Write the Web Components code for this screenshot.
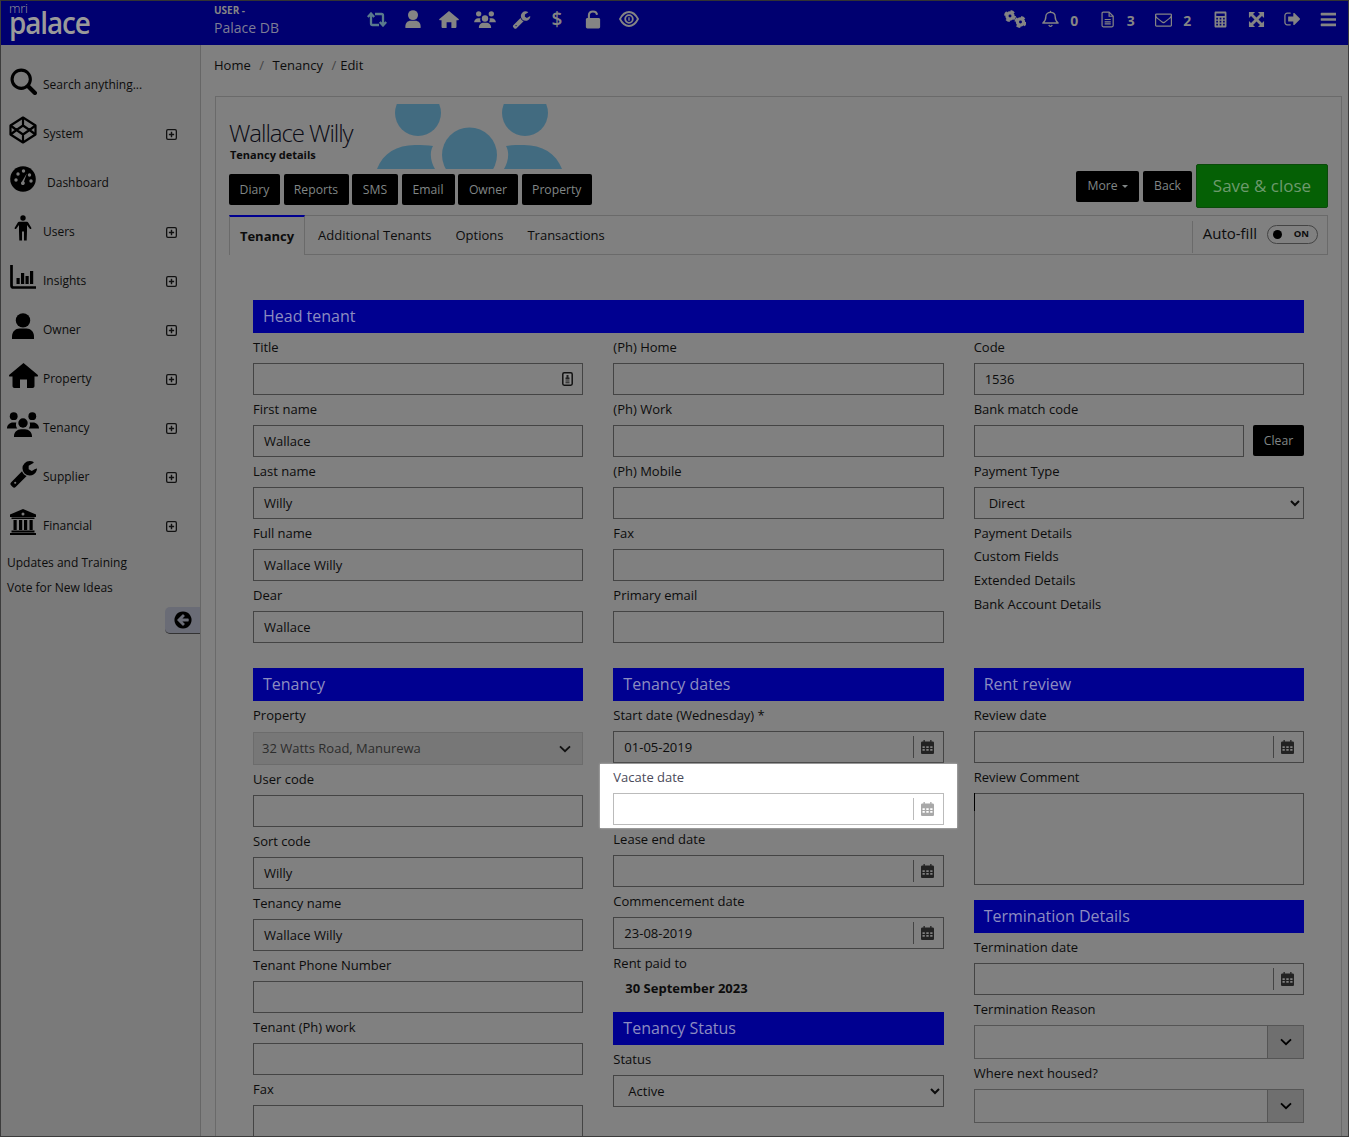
<!DOCTYPE html>
<html lang="en"><head><meta charset="utf-8"><title>Tenancy</title>
<style>
html,body{margin:0;padding:0;background:#808080;}
body{font-family:"Open Sans","Liberation Sans",sans-serif;font-size:13px;color:#0c0c0c;}
.col{display:block;min-width:0}
.g3{display:grid;grid-template-columns:repeat(3,1fr);column-gap:30px}
p-crumbs a{display:inline-flex;align-items:center}
p-crumbs a+a::before{content:"/";color:#444;margin:0 8.500px}
p-crumbs a:last-child::before{margin-right:4px}
p-linklist a{display:block}
</style></head><body>
<p-app>
  <p-header slot="header"></p-header>
  <p-sidebar slot="side">
    <p-nav icon="search">Search anything...</p-nav>
    <p-nav icon="codepen" plus>System</p-nav>
    <p-nav icon="dash" shift>Dashboard</p-nav>
    <p-nav icon="male" plus>Users</p-nav>
    <p-nav icon="chart" plus>Insights</p-nav>
    <p-nav icon="user" plus>Owner</p-nav>
    <p-nav icon="home" plus>Property</p-nav>
    <p-nav icon="users" plus>Tenancy</p-nav>
    <p-nav icon="wrench" plus>Supplier</p-nav>
    <p-nav icon="bank" plus>Financial</p-nav>
  </p-sidebar>
  <p-crumbs>
    <a>Home</a><a>Tenancy</a><a>Edit</a>
  </p-crumbs>
  <p-panel>
    <p-head></p-head>
    <p-tabs></p-tabs>
    <p-body>
      <p-section title="Head tenant">
        <div class="g3">
          <div class="col">
            <p-field label="Title" type="pick"></p-field>
            <p-field label="First name">Wallace</p-field>
            <p-field label="Last name">Willy</p-field>
            <p-field label="Full name">Wallace Willy</p-field>
            <p-field label="Dear">Wallace</p-field>
          </div>
          <div class="col">
            <p-field label="(Ph) Home"></p-field>
            <p-field label="(Ph) Work"></p-field>
            <p-field label="(Ph) Mobile"></p-field>
            <p-field label="Fax"></p-field>
            <p-field label="Primary email"></p-field>
          </div>
          <div class="col">
            <p-field label="Code">1536</p-field>
            <p-field label="Bank match code" type="clear"></p-field>
            <p-field label="Payment Type" type="native" options="Direct"></p-field>
            <p-linklist><a>Payment Details</a><a>Custom Fields</a><a>Extended Details</a><a>Bank Account Details</a></p-linklist>
          </div>
        </div>
      </p-section>
      <div class="g3" style="margin-top:25px">
        <div class="col">
          <p-section title="Tenancy">
            <p-field label="Property" type="disabled">32 Watts Road, Manurewa</p-field>
            <p-field label="User code"></p-field>
            <p-field label="Sort code">Willy</p-field>
            <p-field label="Tenancy name">Wallace Willy</p-field>
            <p-field label="Tenant Phone Number"></p-field>
            <p-field label="Tenant (Ph) work"></p-field>
            <p-field label="Fax"></p-field>
          </p-section>
        </div>
        <div class="col">
          <p-section title="Tenancy dates">
            <p-field label="Start date (Wednesday) *" type="date">01-05-2019</p-field>
            <p-field label="Vacate date" type="date" spot></p-field>
            <p-field label="Lease end date" type="date"></p-field>
            <p-field label="Commencement date" type="date">23-08-2019</p-field>
            <p-field label="Rent paid to" type="static">30 September 2023</p-field>
          </p-section>
          <p-section title="Tenancy Status">
            <p-field label="Status" type="native" options="Active"></p-field>
          </p-section>
        </div>
        <div class="col">
          <p-section title="Rent review">
            <p-field label="Review date" type="date"></p-field>
            <p-field label="Review Comment" type="area"></p-field>
          </p-section>
          <p-section title="Termination Details" style="margin-top:15px">
            <p-field label="Termination date" type="date"></p-field>
            <p-field label="Termination Reason" type="combo"></p-field>
            <p-field label="Where next housed?" type="combo"></p-field>
          </p-section>
        </div>
      </div>
    </p-body>
  </p-panel>
</p-app>
<script>
const FA={
 bars:[1536,'M1664 1344v128q0 26-19 45t-45 19h-1408q-26 0-45-19t-19-45v-128q0-26 19-45t45-19h1408q26 0 45 19t19 45zm0-512v128q0 26-19 45t-45 19h-1408q-26 0-45-19t-19-45v-128q0-26 19-45t45-19h1408q26 0 45 19t19 45zm0-512v128q0 26-19 45t-45 19h-1408q-26 0-45-19t-19-45v-128q0-26 19-45t45-19h1408q26 0 45 19t19 45z',0],
 wrench:[1792,'M448 1472q0-26-19-45t-45-19-45 19-19 45 19 45 45 19 45-19 19-45zm644-420l-682 682q-37 37-90 37-52 0-91-37l-106-108q-38-36-38-90 0-53 38-91l681-681q39 98 114.5 173.5t173.5 114.5zm634-435q0 39-23 106-47 134-164.5 217.5t-258.5 83.5q-185 0-316.5-131.5t-131.5-316.5 131.5-316.5 316.5-131.5q58 0 121.5 16.5t107.5 46.5q16 11 16 28t-16 28l-293 169v224l193 107q5-3 79-48.5t135.5-81 70.5-35.5q15 0 23.5 10t8.5 25z',0],
 signout:[1664,'M704 1440q0 4 1 20t.5 26.5-3 23.5-10 19.5-20.5 6.5h-320q-119 0-203.5-84.5t-84.5-203.5v-704q0-119 84.5-203.5t203.5-84.5h320q13 0 22.5 9.5t9.5 22.5q0 4 1 20t.5 26.5-3 23.5-10 19.5-20.5 6.5h-320q-66 0-113 47t-47 113v704q0 66 47 113t113 47h312l11.5 1 11.5 3 8 5.5 7 9 2 13.5zm928-544q0 26-19 45l-544 544q-19 19-45 19t-45-19-19-45v-288h-448q-26 0-45-19t-19-45v-384q0-26 19-45t45-19h448v-288q0-26 19-45t45-19 45 19l544 544q19 19 19 45z',0],
 back:[1792,'M1408 960v-128q0-26-18.5-45t-45.5-19h-502l189-189q19-19 19-45t-19-45l-91-91q-18-18-45-18t-45 18l-362 362-91 91q-18 18-18 45t18 45l91 91 362 362q18 18 45 18t45-18l91-91q18-18 18-45t-18-45l-189-189h502q27 0 45.5-19t18.5-45zm256-64q0 209-103 385.5t-279.5 279.5-385.5 103-385.5-103-279.5-279.5-103-385.5 103-385.5 279.5-279.5 385.5-103 385.5 103 279.5 279.5 103 385.5z',0],
 mail:[1792,'M1664 1504v-768q-32 36-69 66-268 206-426 338-51 43-83 67t-86.5 48.5-102.5 24.5h-2q-48 0-102.5-24.5t-86.5-48.5-83-67q-158-132-426-338-37-30-69-66v768q0 13 9.5 22.5t22.5 9.5h1472q13 0 22.5-9.5t9.5-22.5zm0-1051v-24.5l-.5-13-3-12.5-5.5-9-9-7.5-14-2.5h-1472q-13 0-22.5 9.5t-9.5 22.5q0 168 147 284 193 152 401 317 6 5 35 29.5t46 37.5 44.5 31.5 50.5 27.5 43 9h2q20 0 43-9t50.5-27.5 44.5-31.5 46-37.5 35-29.5q208-165 401-317 54-43 100.5-115.5t46.5-131.5zm128-37v1088q0 66-47 113t-113 47h-1472q-66 0-113-47t-47-113v-1088q0-66 47-113t113-47h1472q66 0 113 47t47 113z',0]
};
const gear=(x,y,r)=>`<circle cx="${x}" cy="${y}" r="${r*.72}" fill="none" stroke="currentColor" stroke-width="${r*.75}"/><circle cx="${x}" cy="${y}" r="${r*1.12}" fill="none" stroke="currentColor" stroke-width="${r*.55}" stroke-dasharray="${r*.88} ${r*.88}"/>`;
const HAND={
 user:`<svg viewBox="0 0 22 26" fill="currentColor"><circle cx="11" cy="7.400" r="7.200"/><path d="M0 26v-2.500C0 18.500 3.500 15.500 7.500 15.500h7c4 0 7.500 3 7.500 8V26z"/></svg>`,
 home:`<svg viewBox="0 0 29 25" fill="currentColor"><path d="M14.500 0 28.600 11.800c.8.700.3 1.800-.6 1.800H25.500V23c0 1.200-.8 2-2 2H18V16.500H11V25H5.500c-1.200 0-2-.8-2-2V13.600H1c-.9 0-1.400-1.100-.6-1.800z"/></svg>`,
 users:`<svg viewBox="0 0 32 25" fill="currentColor"><circle cx="6.700" cy="4.200" r="3.900"/><circle cx="25.300" cy="4.200" r="3.900"/><circle cx="16" cy="11" r="4.700"/><path d="M0 16.500c0-3.500 2.800-6 6-6h3.300c-.7 2.200-.3 4.300 1 6zM32 16.500c0-3.500-2.800-6-6-6h-3.300c.7 2.200.3 4.300-1 6zM7 25v-.8c0-4 3.200-7 7-7h4c3.800 0 7 3 7 7v.8z"/></svg>`,
 retweet:`<svg viewBox="0 0 20 15" fill="none" stroke="currentColor" stroke-width="2.300"><path d="M.8 5 4 1.500 7.200 5M4 2v9.500Q4 13 5.500 13H12M8 2h6.500Q16 2 16 3.500V13M12.800 10 16 13.500 19.200 10"/></svg>`,
 search:`<svg viewBox="0 0 26 26" fill="none" stroke="currentColor"><circle cx="10.800" cy="10.800" r="8.800" stroke-width="3"/><path d="M17.500 17.500 24 24" stroke-width="4" stroke-linecap="round"/></svg>`,
 cal:`<svg viewBox="0 0 13 14"><path fill="currentColor" fill-rule="evenodd" d="M2.500 0h1.300v1.500h5.400V0h1.300v1.500h1.200c.7 0 1.300.6 1.300 1.300v9.900c0 .7-.6 1.300-1.300 1.300H1.300C.6 14 0 13.400 0 12.700V2.800c0-.7.6-1.300 1.300-1.300h1.200zM1.500 6.200v1.700h2.300V6.200zm3.800 0v1.700h2.400V6.200zm3.900 0v1.700h2.300V6.200zm-7.700 2.900v1.700h2.300V9.100zm3.800 0v1.700h2.400V9.100zm3.900 0v1.700h2.300V9.100z"/></svg>`,
 cogs:`<svg viewBox="0 0 22 18">${gear(6,6,4.300)}${gear(16.500,12,4.300)}</svg>`,
 bell:`<svg viewBox="0 0 20 20" fill="none" stroke="currentColor" stroke-width="1.600"><path d="M10 2.200c-3.500 0-5.500 2.300-5.500 5.200 0 3.800-1.300 5.600-3.500 7.300h18c-2.200-1.700-3.500-3.500-3.500-7.300 0-2.900-2-5.200-5.500-5.200z" stroke-linejoin="round"/><path d="M8 17.200c.4 1 1.100 1.500 2 1.500s1.600-.5 2-1.500"/><path d="M10 .4v1.800"/></svg>`,
 file:`<svg viewBox="0 0 16 20" fill="none" stroke="currentColor" stroke-width="1.500"><path d="M2.800 1H10l5 5v11.500c0 .9-.6 1.500-1.500 1.500H2.800c-.9 0-1.500-.6-1.500-1.500v-15C1.300 1.600 1.900 1 2.800 1z" stroke-linejoin="round"/><path d="M10 1v5h5M4.500 10h7.500M4.500 12.800h7.500M4.500 15.500h7.500"/></svg>`,
 calc:`<svg viewBox="0 0 15 20"><path fill="currentColor" fill-rule="evenodd" d="M2 .5h11c.9 0 1.500.6 1.500 1.500v16c0 .9-.6 1.500-1.500 1.500H2c-.9 0-1.500-.6-1.500-1.500V2C.5 1.100 1.100.5 2 .5zM2.500 3v3h10V3zM2.500 8v2h2V8zm4 0v2h2V8zm4 0v2h2V8zm-8 3.500v2h2v-2zm4 0v2h2v-2zm4 0v2h2v-2zm-8 3.500v2h2v-2zm4 0v2h2v-2zm4 0v2h2v-2z"/></svg>`,
 arrows:`<svg viewBox="0 0 18 18" fill="currentColor"><path d="M1 1h6.500L5.300 3.200 9 6.900l3.700-3.700L10.500 1H17v6.500l-2.200-2.200L11.100 9l3.700 3.700 2.200-2.200V17h-6.500l2.200-2.200L9 11.100l-3.700 3.700L7.500 17H1v-6.500l2.200 2.200L6.900 9 3.200 5.300 1 7.500z"/></svg>`,
 unlock:`<svg viewBox="0 0 16 20"><path fill="currentColor" d="M2 8.500h12c.8 0 1.500.7 1.500 1.500v8c0 .8-.7 1.500-1.500 1.500H2c-.8 0-1.500-.7-1.500-1.500v-8c0-.8.7-1.500 1.500-1.500z"/><path d="M3.700 9V5.500C3.700 3 5.500 1.500 8 1.500s4 1.300 4.300 3.500" fill="none" stroke="currentColor" stroke-width="2.200"/></svg>`,
 eye:`<svg viewBox="0 0 20 16" fill="none" stroke="currentColor" stroke-width="1.800"><path d="M1 8c2.200-4.300 5.300-7 9-7s6.800 2.700 9 7c-2.200 4.300-5.300 7-9 7s-6.800-2.700-9-7z"/><circle cx="10" cy="8" r="3.800"/><path d="M10 6.300v3.400" stroke-width="1.400"/></svg>`,
 codepen:`<svg viewBox="0 0 28 28" fill="none" stroke="currentColor" stroke-width="2.200" stroke-linejoin="round"><path d="M14 1.500 26.500 9.500v9L14 26.500 1.500 18.500v-9z"/><path d="M14 9.500 20.500 14 14 18.500 7.500 14zM14 1.500v8M14 18.500v8M1.500 9.500 7.500 14M26.500 9.500 20.500 14M1.500 18.500 7.500 14M26.500 18.500 20.500 14"/></svg>`,
 dash:`<svg viewBox="0 0 26 26"><circle cx="13" cy="13" r="12.800" fill="currentColor"/><g fill="#7a7a7a"><circle cx="6" cy="14" r="1.700"/><circle cx="8" cy="8" r="1.700"/><circle cx="13.500" cy="5" r="1.700"/><circle cx="19.500" cy="9" r="1.700"/><circle cx="21" cy="15" r="1.700"/><path d="M16.800 7.500 14 15.500c1.200.6 1.200 3-.5 3.500-2.200.6-3.500-2.200-1.500-3.500z"/></g></svg>`,
 male:`<svg viewBox="0 0 18 26" fill="currentColor"><circle cx="9" cy="3" r="2.700"/><path d="M5.600 6.800h6.800c1 0 1.500.4 1.900 1l3 5c.5 1-.9 1.800-1.500.9L13 10v6.300L12.700 25.500H10v-9H8v9H5.300L5 16.300V10l-2.800 3.700c-.6.900-2 .1-1.500-.9l3-5c.4-.6.900-1 1.900-1z"/></svg>`,
 chart:`<svg viewBox="0 0 26 24"><path d="M1.500 0v20.500c0 1.300.8 2 2 2H25.500" fill="none" stroke="currentColor" stroke-width="2.700" stroke-linecap="round"/><g fill="currentColor"><rect x="6.500" y="13" width="3.200" height="6"/><rect x="11" y="8" width="3.200" height="11"/><rect x="15.500" y="11" width="3.200" height="8"/><rect x="20" y="6" width="3.200" height="13"/></g></svg>`,
 bank:`<svg viewBox="0 0 26 26" fill="currentColor"><path d="M13 0 26 5.500V8H0V5.500z"/><path d="M1.500 8.500h23V10h-23z"/><rect x="3.500" y="11" width="3.200" height="10"/><rect x="9" y="11" width="3.200" height="10"/><rect x="14" y="11" width="3.200" height="10"/><rect x="19.500" y="11" width="3.200" height="10"/><path d="M1.500 21.500h23V23.500h-23zM0 24h26v2H0z"/><circle cx="13" cy="5" r="1.500" fill="#7a7a7a"/></svg>`,
 plus:`<svg viewBox="0 0 10 10"><rect x=".6" y=".6" width="8.800" height="8.800" rx="1.200" fill="#858585" stroke="currentColor" stroke-width="1.200"/><path d="M5 2.600v4.800M2.600 5h4.800" stroke="currentColor" stroke-width="1.300"/></svg>`,
 idcard:`<svg viewBox="0 0 11 14"><rect x=".8" y=".8" width="9.400" height="12.400" rx="1.400" fill="#8a8a8a" stroke="#111" stroke-width="1.500"/><path d="M4.500 3h2v2.500h1v2h-4v-2h1zM3.500 8.500h4v1h-4zM3.500 10.300h4v1h-4z" fill="#222"/></svg>`,
 chev:`<svg viewBox="0 0 12 8" fill="none" stroke="currentColor" stroke-width="1.800"><path d="M1 1.300 6 6.200 11 1.300"/></svg>`
};
function icon(name,w,h){
  let s;
  if(HAND[name]) s=HAND[name];
  else{const a=FA[name];const top=a[2]||0;s=`<svg viewBox="0 ${top} ${a[0]} 1792"><path fill="currentColor" d="${a[1]}"/></svg>`;}
  return s.replace('<svg ',`<svg style="width:${w}px;height:${h}px;display:block;flex:none" aria-hidden="true" `);
}
function def(tag,css,html){
  customElements.define(tag,class extends HTMLElement{
    connectedCallback(){
      if(this.shadowRoot)return;
      const r=this.attachShadow({mode:'open'});
      r.innerHTML=`<style>${css}</style>`+(typeof html==='function'?html(this):html);
    }
  });
}
def('p-app',`
 :host{display:block;box-sizing:border-box;width:1349px;height:1137px;overflow:hidden;border:1px solid #3c3c3c;border-top-color:#333;background:#808080}
 .main{display:flex;height:1092px}
 .side{flex:none;width:199px}
 .content{flex:1;min-width:0;padding:0 6px 0 14px}
`,`<slot name="header"></slot><div class="main"><div class="side"><slot name="side"></slot></div><div class="content"><slot></slot></div></div>`);
const hTop=[['retweet',20,15,'#5a7a8c'],['user',16,18],['home',20,17],['users',22,17],['wrench',19,19],['$'],['unlock',16,19],['eye',20,16]];
const hRight=[['cogs',22,18],['bell',17,18],0,['file',13,17],3,['mail',17,17],2,['calc',13,17],['arrows',17,17],['signout',18,18],['bars',17,19]];
def('p-header',`
 :host{display:flex;height:44px;background:#000070;color:#848484;align-items:flex-start}
 .logo{width:213px;flex:none;box-sizing:border-box;padding:0 0 0 8px;color:#9a9a9a;line-height:1}
 .mri{display:block;font:300 13px/11px "Open Sans",sans-serif;padding-top:2px;height:11px;letter-spacing:-.3px}
 .pal{display:block;font:600 30px/24px "Open Sans",sans-serif;letter-spacing:-1.200px;transform:scaleX(.93);transform-origin:left;margin-top:-3px}
 .who{width:145px;flex:none;padding-top:3px}
 .u{font:700 10px/12px "Open Sans",sans-serif;color:#858585;display:block}
 .d{font:400 14px/20px "Open Sans",sans-serif;color:#7d7d95;display:block;margin-top:2px}
 .ic{width:36px;flex:none;display:flex;align-items:center;justify-content:center;height:36px;box-sizing:border-box}
 .dollar{font:600 19px/1 "Open Sans",sans-serif}
 .sp{flex:1}
 .n{width:20.500px;box-sizing:border-box;padding-right:9px;flex:none;height:40px;display:flex;align-items:center;justify-content:center;font:700 14px/1 "Open Sans",sans-serif;color:#858585}
 .end{width:2px;flex:none}
`,()=>`<div class="logo"><span class="mri">mri</span><span class="pal">palace</span></div>
 <div class="who"><span class="u">USER -</span><span class="d">Palace DB</span></div>
 ${hTop.map(i=>i[0]==='$'?`<div class="ic"><span class="dollar">$</span></div>`:`<div class="ic" ${i[3]?`style="color:${i[3]}"`:''}>${icon(i[0],i[1],i[2])}</div>`).join('')}
 <div class="sp"></div>
 ${hRight.map(i=>typeof i==='number'?`<div class="n">${i}</div>`:`<div class="ic" ${i[0]==='bars'?'style="padding-right:2px"':''}>${icon(i[0],i[1],i[2])}</div>`).join('')}<div class="end"></div>`);
const NAVSZ={search:[27,27],codepen:[28,28],dash:[26,26],male:[18,26],chart:[26,24],user:[22,26],home:[29,25],users:[32,25],wrench:[29,29],bank:[26,26]};
def('p-sidebar',`
 :host{display:block;box-sizing:border-box;width:200px;height:100%;background:#7a7a7a;border-right:1px solid #666;padding-top:15px;color:#0c0c0c;font:400 12px/25px "Open Sans",sans-serif}
 .l{display:block;padding-left:6px}
 .b{display:flex;width:35px;height:27px;margin:7px 0 0 auto;background:#6a6c76;border-radius:5px 0 0 5px;border-bottom:1px solid #333;box-sizing:border-box;align-items:center;justify-content:center;color:#000}
`,()=>`<slot></slot><span class="l">Updates and Training</span><span class="l">Vote for New Ideas</span><div class="b">${icon('back',20,20)}</div>`);
def('p-nav',`
 :host{display:flex;height:49px;align-items:center;color:#0c0c0c}
 .i{width:36px;margin-left:4px;margin-bottom:7px;flex:none;display:flex;justify-content:center;align-items:center;color:#000}
 .t{margin-left:2px;flex:1}
 :host([shift]) .t{margin-left:6px}
 .p{width:11px;margin:2px 23px 0 0;color:#111;flex:none}
`,h=>{const n=h.getAttribute('icon'),s=NAVSZ[n];return `<div class="i">${icon(n,s[0],s[1])}</div><div class="t"><slot></slot></div>${h.hasAttribute('plus')?`<div class="p">${icon('plus',11,11)}</div>`:''}`});
def('p-crumbs',`
 :host{display:flex;height:40px;align-items:center;font:400 13px/20px "Open Sans",sans-serif;color:#0c0c0c}
 .w{display:flex;align-items:center}
`,`<div class="w"><slot></slot></div>`);
def('p-panel',`:host{display:block;border:1px solid #6a6a6a;padding:0 13px;height:1100px;margin:11px 0 0 1px;box-sizing:border-box}`,`<slot></slot>`);
def('p-head',`
 :host{display:flex;height:118px;box-sizing:border-box;align-items:flex-end;justify-content:space-between;position:relative}
 .art{position:absolute;left:148px;top:7px;width:185px;height:65px}
 .l{position:relative;padding-bottom:10px}
 h1{margin:0;font:300 24px/34px "Open Sans",sans-serif;letter-spacing:-1.050px;color:#0a0a14}
 .s{font:700 11px/14px "Open Sans",sans-serif;color:#0c0c0c;margin:-2px 0 12px 1px}
 .btns{display:flex;gap:3.500px}
 .b{background:#000;color:#808686;border-radius:2px;height:31px;box-sizing:border-box;display:flex;align-items:center;justify-content:center;font:400 12.200px/1 "Open Sans",sans-serif}
 .btns .b{padding-top:1px}
 .r{display:flex;align-items:center;gap:4px;margin-bottom:7px;position:relative}
 .save{background:#056005;color:#6d9a6d;width:132px;height:44px;padding-bottom:2px;font-size:17px;border:1px solid #0a4a0a;border-radius:2px;box-sizing:border-box;display:flex;align-items:center;justify-content:center}
 .car{display:inline-block;border:3px solid transparent;border-top-color:currentColor;border-bottom:0;margin-left:4px;margin-top:1px}
`,`<svg class="art" viewBox="0 0 185 65" aria-hidden="true" fill="#426b80"><circle cx="41" cy="9" r="23"/><circle cx="148" cy="9" r="23"/><circle cx="92.500" cy="51" r="27.500"/><path d="M0 65C6 49 20 41 38 41c7 0 13 0 18 1-4 7-2 16 2 23zM185 65C179 49 165 41 147 41c-7 0-13 0-18 1 4 7 2 16-2 23z"/></svg>
 <div class="l"><h1>Wallace Willy</h1><div class="s">Tenancy details</div>
  <div class="btns"><div class="b" style="width:51px">Diary</div><div class="b" style="width:65px">Reports</div><div class="b" style="width:46px">SMS</div><div class="b" style="width:53px">Email</div><div class="b" style="width:60px">Owner</div><div class="b" style="width:70.500px">Property</div></div></div>
 <div class="r"><div class="b" style="width:63px">More<span class="car"></span></div><div class="b" style="width:49px">Back</div><div class="save">Save &amp; close</div></div>`);
def('p-tabs',`
 :host{display:flex;height:40px;box-sizing:border-box;border:1px solid #6a6a6a;border-left:0;align-items:stretch;font:400 13px/1 "Open Sans",sans-serif;color:#0c0c0c}
 .t{display:flex;align-items:center;padding:0 12px}
 .a{font-weight:700;border-left:1px solid #6a6a6a;border-right:1px solid #6a6a6a;border-top:2px solid #000090;margin-top:-1px;margin-bottom:-1px;padding:0 10px;background:#808080;width:54px;justify-content:center}
 .f{margin-left:1px}
 .auto{margin-left:auto;display:flex;align-items:center;border-left:1px solid #6a6a6a;margin-block:5px 1px;padding:0 9px 7px 10px;font-size:15px}
 .tog{margin-left:10px;margin-top:1px;width:51px;height:19px;box-sizing:border-box;border:1px solid #444;border-radius:10px;display:flex;align-items:center;justify-content:space-between;padding:0 8px 0 5px;font:700 9.500px/1 "Open Sans",sans-serif}
 .dot{width:9px;height:9px;border-radius:50%;background:#000}
`,`<div class="t a">Tenancy</div><div class="t f">Additional Tenants</div><div class="t">Options</div><div class="t">Transactions</div>
 <div class="auto">Auto-fill<div class="tog"><span class="dot"></span>ON</div></div>`);
def('p-body',`:host{display:block;padding:45px 24px 0}`,`<slot></slot>`);
def('p-section',`
 :host{display:block}
 .bar{height:33px;background:#000090;color:#8c8cc0;font:400 16px/32px "Open Sans",sans-serif;padding-left:10px}
`,h=>`<div class="bar">${h.getAttribute('title')}</div><slot></slot>`);
def('p-linklist',`
 :host{display:block;font:400 13px/23.700px "Open Sans",sans-serif;color:#0c0c0c;padding-top:2.500px}
`,`<slot></slot>`);
def('p-field',`
 :host{display:block;position:relative;font:400 13px/20px "Open Sans",sans-serif;color:#0c0c0c;z-index:0}
 :host([spot]){z-index:1}
 :host([spot])::before{content:"";position:absolute;left:-13px;right:-13px;top:1px;bottom:-3px;background:#fff;box-shadow:0 0 2px rgba(255,255,255,.6);z-index:-1}
 .lb{height:30px;box-sizing:border-box;padding-bottom:2px;display:flex;align-items:center}
 .in{height:32px;box-sizing:border-box;border:1px solid #444;display:flex;align-items:center;padding:0 10px}
 .val{flex:1;min-width:0}
 :host([spot]) .lb{color:#4a4a5a}
 :host([spot]) .in{border-color:#bbb}
 :host([spot]) .sep{background:#bbb}
 :host([spot]) .cal{color:#a8a8a8}
 .sep{width:1px;height:22px;background:#444;margin-right:7px}
 .cal{color:#222;margin-right:9px}
 .date{padding-right:0}
 .pick{padding-right:9px}
 .dis{height:33px;margin-top:1px;background:#777;border-color:#6c6c6c;color:#2c2c2c;padding:0 11px 0 8px}
 .dis .val{padding-bottom:2px}
 .dis .ch{color:#111}
 .row{display:flex;gap:9px}.row .in{flex:1}
 .clear{background:#000;color:#808686;width:51px;height:31px;display:flex;align-items:center;justify-content:center;font-size:12.200px;border-radius:2px}
 select{display:block;width:100%;height:32px;box-sizing:border-box;border:1px solid #444;background:transparent;color:#0c0c0c;font:400 13px "Open Sans",sans-serif;padding:0 10px;border-radius:0}
 .static{height:33px;font-weight:700;padding-left:12px;line-height:18px}
 .area{height:92px;align-items:flex-start;position:relative}
 .caret{position:absolute;left:-1px;top:-1px;width:1px;height:18px;background:#000}
 .combo{height:34px;padding:0;border-color:#555}
 .chb{width:35px;height:100%;border-left:1px solid #555;background:#6f6f6f;display:flex;align-items:center;justify-content:center;color:#000}
`,h=>{
  const t=h.getAttribute('type')||'text',l=h.getAttribute('label');
  let b;
  if(t==='date')b=`<div class="in date"><div class="val"><slot></slot></div><div class="sep"></div><div class="cal">${icon('cal',13,14)}</div></div>`;
  else if(t==='pick')b=`<div class="in pick"><div class="val"><slot></slot></div>${icon('idcard',11,14)}</div>`;
  else if(t==='disabled')b=`<div class="in dis"><div class="val"><slot></slot></div><div class="ch">${icon('chev',12,8)}</div></div>`;
  else if(t==='clear')b=`<div class="row"><div class="in"></div><div class="clear">Clear</div></div>`;
  else if(t==='native')b=`<select aria-label="${l}"><option>${h.getAttribute('options')}</option></select>`;
  else if(t==='static')b=`<div class="static"><slot></slot></div>`;
  else if(t==='area')b=`<div class="in area"><span class="caret"></span></div>`;
  else if(t==='combo')b=`<div class="in combo"><div class="val"></div><div class="chb">${icon('chev',12,8)}</div></div>`;
  else b=`<div class="in"><div class="val"><slot></slot></div></div>`;
  return `<div class="lb">${l}</div>${b}`;
});
</script>
</body></html>
